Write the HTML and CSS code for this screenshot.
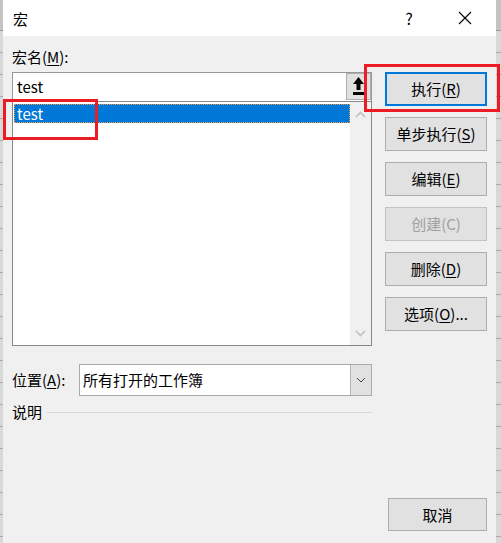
FILE: index.html
```html
<!DOCTYPE html>
<html lang="zh-CN">
<head>
<meta charset="utf-8">
<title>宏</title>
<link rel="stylesheet" href="styles.css">
</head>
<body>
<div class="screen">
  <div class="sheet sheet-left"></div>
  <div class="dialog">
    <div class="titlebar">
      <span class="title">宏</span>
      <span class="help">?</span>
      <span class="close">
        <svg width="14" height="14" viewBox="0 0 14 14"><path d="M1 1 L13 13 M13 1 L1 13" stroke="#000" stroke-width="1.1" fill="none"/></svg>
      </span>
    </div>
    <div class="content">
      <div class="main">
        <div class="label">宏名(<u>M</u>):</div>
        <div class="combo">
          <div class="name-row">
            <div class="name-input">test</div>
            <div class="pick-btn">
              <svg width="11" height="19" viewBox="0 0 11 19"><path d="M5.5 0 L11 7 L7.5 7 L7.5 13 L3.5 13 L3.5 7 L0 7 Z" fill="#000"/><rect x="0" y="15" width="11" height="3" fill="#000"/></svg>
            </div>
          </div>
          <div class="list">
            <div class="items">
              <div class="item selected">test</div>
            </div>
            <div class="scrollbar">
              <svg width="11" height="7" viewBox="0 0 11 7"><path d="M1 6 L5.5 1.5 L10 6" stroke="#c2c2c2" stroke-width="1.6" fill="none"/></svg>
              <svg width="11" height="7" viewBox="0 0 11 7"><path d="M1 1 L5.5 5.5 L10 1" stroke="#c2c2c2" stroke-width="1.6" fill="none"/></svg>
            </div>
          </div>
        </div>
        <div class="location">
          <span class="loc-label">位置(<u>A</u>):</span>
          <div class="select">
            <span class="select-text">所有打开的工作簿</span>
            <span class="select-btn">
              <svg width="10" height="6" viewBox="0 0 10 6"><path d="M1 1 L5 5 L9 1" stroke="#444" stroke-width="1" fill="none"/></svg>
            </span>
          </div>
        </div>
        <div class="desc">
          <span>说明</span>
          <span class="rule"></span>
        </div>
      </div>
      <div class="actions">
        <div class="btn primary">执行(<u>R</u>)</div>
        <div class="btn">单步执行(<u>S</u>)</div>
        <div class="btn">编辑(<u>E</u>)</div>
        <div class="btn disabled">创建(C)</div>
        <div class="btn">删除(<u>D</u>)</div>
        <div class="btn">选项(<u>O</u>)...</div>
      </div>
    </div>
    <div class="footer">
      <div class="btn cancel">取消</div>
    </div>
  </div>
  <div class="sheet sheet-right"></div>
  <div class="mark mark-run"></div>
  <div class="mark mark-item"></div>
</div>
</body>
</html>
```

FILE: styles.css
```css
html, body {
  margin: 0;
  padding: 0;
}
body {
  width: 501px;
  height: 543px;
  overflow: hidden;
  font-family: "Noto Sans CJK SC", sans-serif;
  font-size: 15px;
  color: #000;
}
u {
  text-decoration-thickness: 1px;
  text-underline-offset: 2px;
}
.screen {
  position: relative;
  display: flex;
  width: 501px;
  height: 543px;
}
.sheet {
  height: 543px;
  background:
    linear-gradient(#c4c4c4 0 30px, #9c9c9c 30px 31px, transparent 31px),
    repeating-linear-gradient(to bottom, transparent 0 21px, #aaaaaa 21px 22px) 0 9px,
    #d8d8d8;
}
.sheet-left { width: 3px; }
.sheet-right { width: 5px; }
.dialog {
  width: 493px;
  height: 543px;
  display: flex;
  flex-direction: column;
  background: #f0f0f0;
}
.titlebar {
  height: 36px;
  flex: none;
  display: flex;
  align-items: center;
  background: #fff;
}
.title {
  flex: 1;
  padding-left: 10px;
  line-height: 20px;
  padding-top: 1px;
}
.help {
  width: 50px;
  text-align: center;
  font-size: 16px;
  line-height: 20px;
}
.close {
  width: 62px;
  display: flex;
  justify-content: center;
  align-items: center;
}
.content {
  display: flex;
  gap: 13px;
  padding: 11px 9px 0 9px;
}
.main {
  width: 360px;
  display: flex;
  flex-direction: column;
}
.label {
  height: 20px;
  line-height: 20px;
  margin-bottom: 5px;
}
.combo {
  display: flex;
  flex-direction: column;
}
.name-row {
  height: 29px;
  box-sizing: border-box;
  display: flex;
  border: 1px solid #999999;
  border-bottom: none;
  background: #fff;
}
.name-input {
  flex: 1;
  padding-left: 4px;
  line-height: 27px;
}
.pick-btn {
  width: 25px;
  height: 27px;
  box-sizing: border-box;
  border: 1px solid #adadad;
  background: #e1e1e1;
  display: flex;
  justify-content: center;
  align-items: center;
}
.list {
  height: 245px;
  box-sizing: border-box;
  border: 1px solid #828790;
  background: #fff;
  display: flex;
}
.items {
  flex: 1;
  padding: 2px 0 0 1px;
}
.item {
  height: 19px;
  line-height: 17px;
  padding-left: 2px;
  box-sizing: border-box;
}
.item.selected {
  background: #0078d7;
  color: #fff;
  border: 1px dotted #f29a45;
}
.scrollbar {
  width: 21px;
  background: #f0f0f0;
  display: flex;
  flex-direction: column;
  justify-content: space-between;
  align-items: center;
  padding: 9px 0 8px;
  box-sizing: border-box;
}
.location {
  margin-top: 18px;
  height: 32px;
  display: flex;
  align-items: center;
}
.loc-label {
  flex: 1;
  line-height: 20px;
}
.select {
  width: 293px;
  height: 32px;
  box-sizing: border-box;
  border: 1px solid #a9a9a9;
  background: #fff;
  display: flex;
}
.select-text {
  flex: 1;
  padding-left: 3px;
  line-height: 30px;
}
.select-btn {
  width: 20px;
  border-left: 1px solid #b4b4b4;
  background: #e1e1e1;
  display: flex;
  justify-content: center;
  align-items: center;
}
.desc {
  margin-top: 6px;
  height: 20px;
  display: flex;
  align-items: center;
  gap: 5px;
  line-height: 20px;
}
.rule {
  flex: 1;
  height: 1px;
  background: #d9d9d9;
}
.actions {
  width: 102px;
  margin-top: 25px;
  display: flex;
  flex-direction: column;
  gap: 11px;
}
.btn {
  height: 34px;
  box-sizing: border-box;
  border: 1px solid #adadad;
  background: #e1e1e1;
  display: flex;
  justify-content: center;
  align-items: center;
  line-height: 20px;
}
.btn.primary {
  border: 2px solid #0078d7;
}
.btn.disabled {
  color: #a0a0a0;
  border-color: #c4c4c4;
}
.footer {
  margin-top: auto;
  display: flex;
  justify-content: flex-end;
  padding: 0 9px 12px 0;
}
.btn.cancel {
  width: 99px;
  height: 33px;
}
.mark {
  position: absolute;
  box-sizing: border-box;
  border: 3px solid #ec1c24;
}
.mark-run {
  left: 364px;
  top: 64px;
  width: 136px;
  height: 48px;
}
.mark-item {
  left: 3px;
  top: 99px;
  width: 95px;
  height: 41px;
}
```
